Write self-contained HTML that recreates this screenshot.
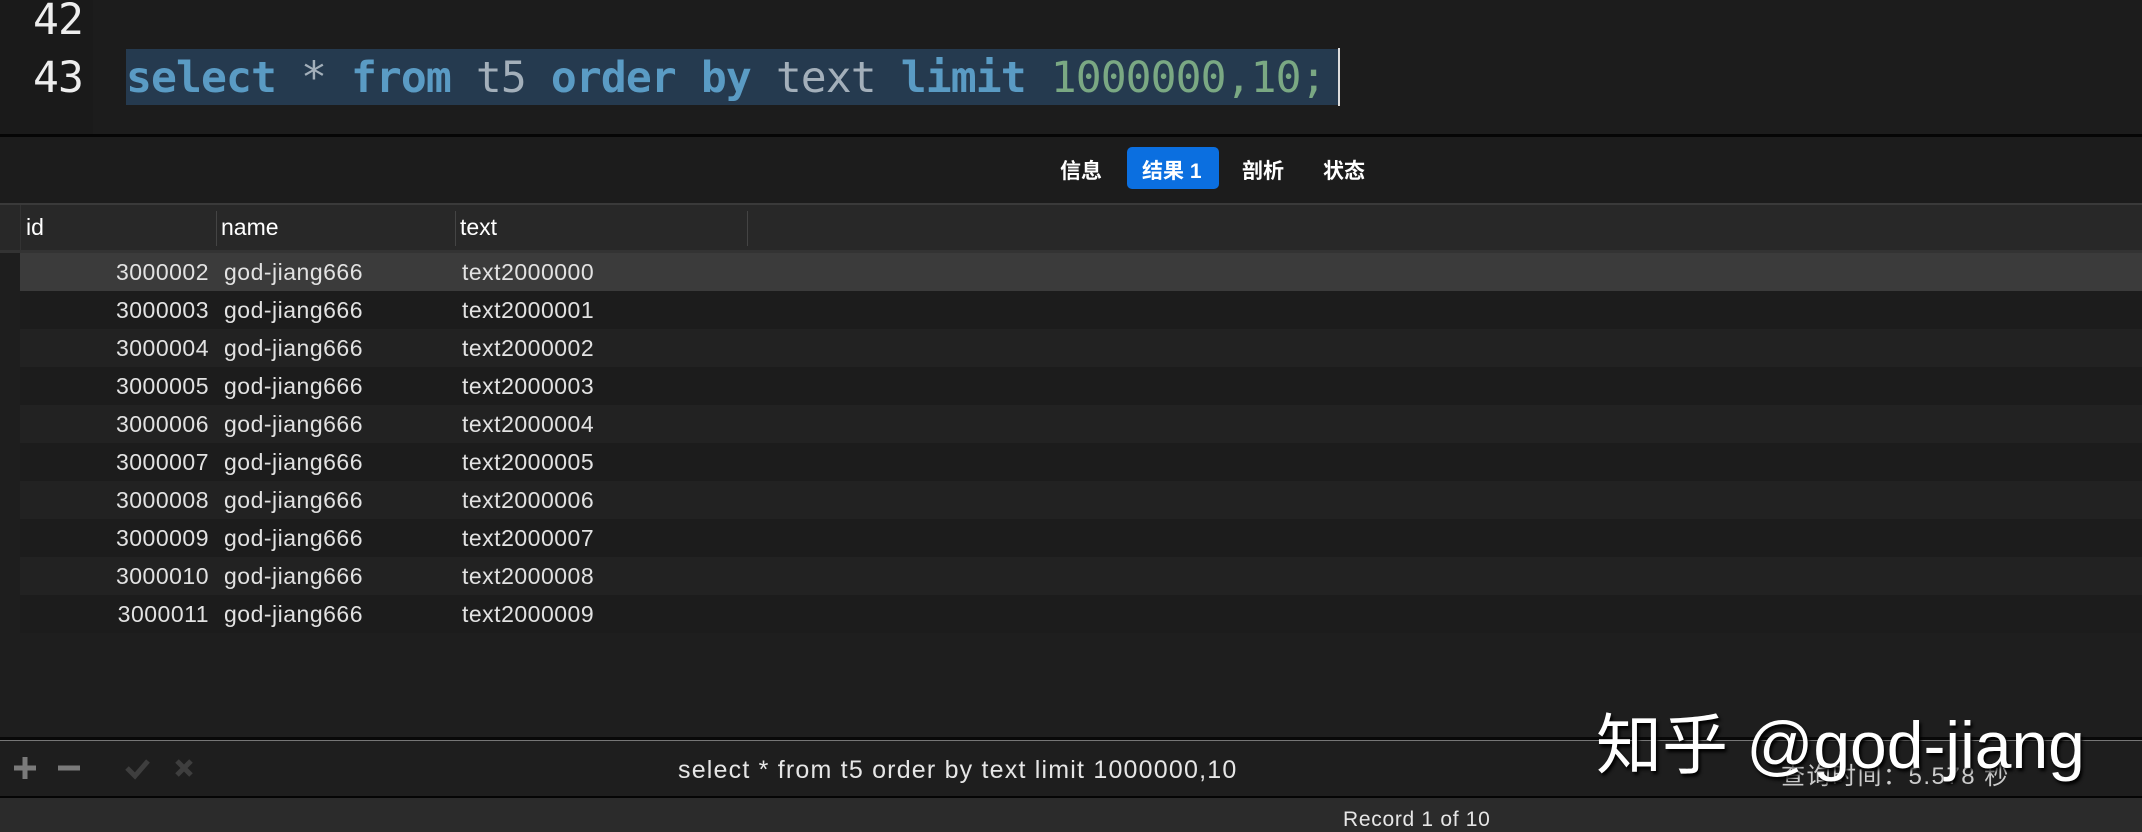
<!DOCTYPE html>
<html><head><meta charset="utf-8"><style>
*{margin:0;padding:0;box-sizing:border-box}
body{width:2142px;height:832px;overflow:hidden;background:#1e1e1e;position:relative;font-family:"Liberation Sans","Noto Sans CJK SC",sans-serif;color:#e6e6e6}
.a{position:absolute;white-space:nowrap}
.code{font-family:"DejaVu Sans Mono","Liberation Mono",monospace;font-size:43px;letter-spacing:-0.9px}
.kw{color:#5a9bc4;font-weight:bold}
.id{color:#a3afba}
.num{color:#7aa883}
.tab{font-size:21px;color:#fff;font-weight:bold;top:155px}
.row{position:absolute;left:20px;width:2122px;height:38px;font-size:23px;letter-spacing:0.5px;color:#e2e2e2}
.row span{position:absolute;top:6px}
</style></head><body>
<div class="a" style="left:0;top:0;width:93px;height:134px;background:#1a1a1a"></div>
<div class="a" style="left:93px;top:0;width:2049px;height:134px;background:#1c1c1c"></div>
<div class="a code" style="left:33px;top:-5px;color:#eee">42</div>
<div class="a code" style="left:33px;top:53px;color:#eee">43</div>
<div class="a" style="left:126px;top:49px;width:1213px;height:56px;background:#253a4f"></div>
<div class="a code" style="left:126px;top:53px"><span class="kw">select</span> <span class="id">*</span> <span class="kw">from</span> <span class="id">t5</span> <span class="kw">order</span> <span class="kw">by</span> <span class="id">text</span> <span class="kw">limit</span> <span class="num">1000000,10;</span></div>
<div class="a" style="left:1338px;top:48px;width:2px;height:58px;background:#ddd"></div>
<div class="a" style="left:0;top:134px;width:2142px;height:3px;background:#050505"></div>
<div class="a" style="left:0;top:137px;width:2142px;height:67px;background:#1c1c1c"></div>
<div class="a" style="left:1127px;top:147px;width:92px;height:42px;background:#0b6fe0;border-radius:5px"></div>
<div class="a tab" style="left:1060px">信息</div>
<div class="a tab" style="left:1142px">结果 1</div>
<div class="a tab" style="left:1242px">剖析</div>
<div class="a tab" style="left:1323px">状态</div>
<div class="a" style="left:0;top:203px;width:2142px;height:2px;background:#3a3a3a"></div>
<div class="a" style="left:0;top:205px;width:2142px;height:45px;background:#282828"></div>
<div class="a" style="left:216px;top:211px;width:1px;height:35px;background:#444"></div>
<div class="a" style="left:455px;top:211px;width:1px;height:35px;background:#444"></div>
<div class="a" style="left:747px;top:211px;width:1px;height:35px;background:#444"></div>
<div class="a" style="left:26px;top:214px;font-size:23px;color:#fff">id</div>
<div class="a" style="left:221px;top:214px;font-size:23px;color:#fff">name</div>
<div class="a" style="left:460px;top:214px;font-size:23px;color:#fff">text</div>
<div class="a" style="left:0;top:250px;width:2142px;height:3px;background:#333"></div>
<div class="a" style="left:20px;top:205px;width:1px;height:535px;background:#333"></div>
<div class="row" style="top:253px;background:#3b3b3b"><span style="right:1933px">3000002</span><span style="left:204px">god-jiang666</span><span style="left:442px">text2000000</span></div>
<div class="row" style="top:291px;background:#1c1c1c"><span style="right:1933px">3000003</span><span style="left:204px">god-jiang666</span><span style="left:442px">text2000001</span></div>
<div class="row" style="top:329px;background:#222"><span style="right:1933px">3000004</span><span style="left:204px">god-jiang666</span><span style="left:442px">text2000002</span></div>
<div class="row" style="top:367px;background:#1c1c1c"><span style="right:1933px">3000005</span><span style="left:204px">god-jiang666</span><span style="left:442px">text2000003</span></div>
<div class="row" style="top:405px;background:#222"><span style="right:1933px">3000006</span><span style="left:204px">god-jiang666</span><span style="left:442px">text2000004</span></div>
<div class="row" style="top:443px;background:#1c1c1c"><span style="right:1933px">3000007</span><span style="left:204px">god-jiang666</span><span style="left:442px">text2000005</span></div>
<div class="row" style="top:481px;background:#222"><span style="right:1933px">3000008</span><span style="left:204px">god-jiang666</span><span style="left:442px">text2000006</span></div>
<div class="row" style="top:519px;background:#1c1c1c"><span style="right:1933px">3000009</span><span style="left:204px">god-jiang666</span><span style="left:442px">text2000007</span></div>
<div class="row" style="top:557px;background:#222"><span style="right:1933px">3000010</span><span style="left:204px">god-jiang666</span><span style="left:442px">text2000008</span></div>
<div class="row" style="top:595px;background:#1c1c1c"><span style="right:1933px">3000011</span><span style="left:204px">god-jiang666</span><span style="left:442px">text2000009</span></div>
<div class="a" style="left:20px;top:633px;width:2122px;height:105px;background:#1e1e1e"></div>
<div class="a" style="left:0;top:737px;width:2142px;height:3px;background:#080808"></div>
<div class="a" style="left:0;top:740px;width:2142px;height:1px;background:#777"></div>
<div class="a" style="left:0;top:741px;width:2142px;height:55px;background:#1e1e1e"></div>
<svg class="a" style="left:10px;top:755px" width="200" height="30"><g stroke="#7a7a7a" stroke-width="5"><path d="M15 2V24M4 13H26"/><path d="M48 13H70"/></g><g stroke="#3e3e3e" stroke-width="5" fill="none"><path d="M117 13L125 21L138 6"/><path d="M167 6L181 20M181 6L167 20"/></g></svg>
<div class="a" style="left:678px;top:756px;font-size:25px;letter-spacing:1.2px;color:#e6e6e6">select * from t5 order by text limit 1000000,10</div>
<div class="a" style="left:1781px;top:756px;font-size:24px;letter-spacing:1.5px;color:#ccc">查询时间：5.578 秒</div>
<div class="a" style="left:1596px;top:692px;font-size:66px;color:#fff;text-shadow:2px 3px 3px #000">知乎 @god-jiang</div>
<div class="a" style="left:0;top:796px;width:2142px;height:2px;background:#050505"></div>
<div class="a" style="left:0;top:798px;width:2142px;height:34px;background:#2b2b2b"></div>
<div class="a" style="left:1343px;top:808px;font-size:21px;letter-spacing:0.7px;color:#e6e6e6">Record 1 of 10</div>
</body></html>
